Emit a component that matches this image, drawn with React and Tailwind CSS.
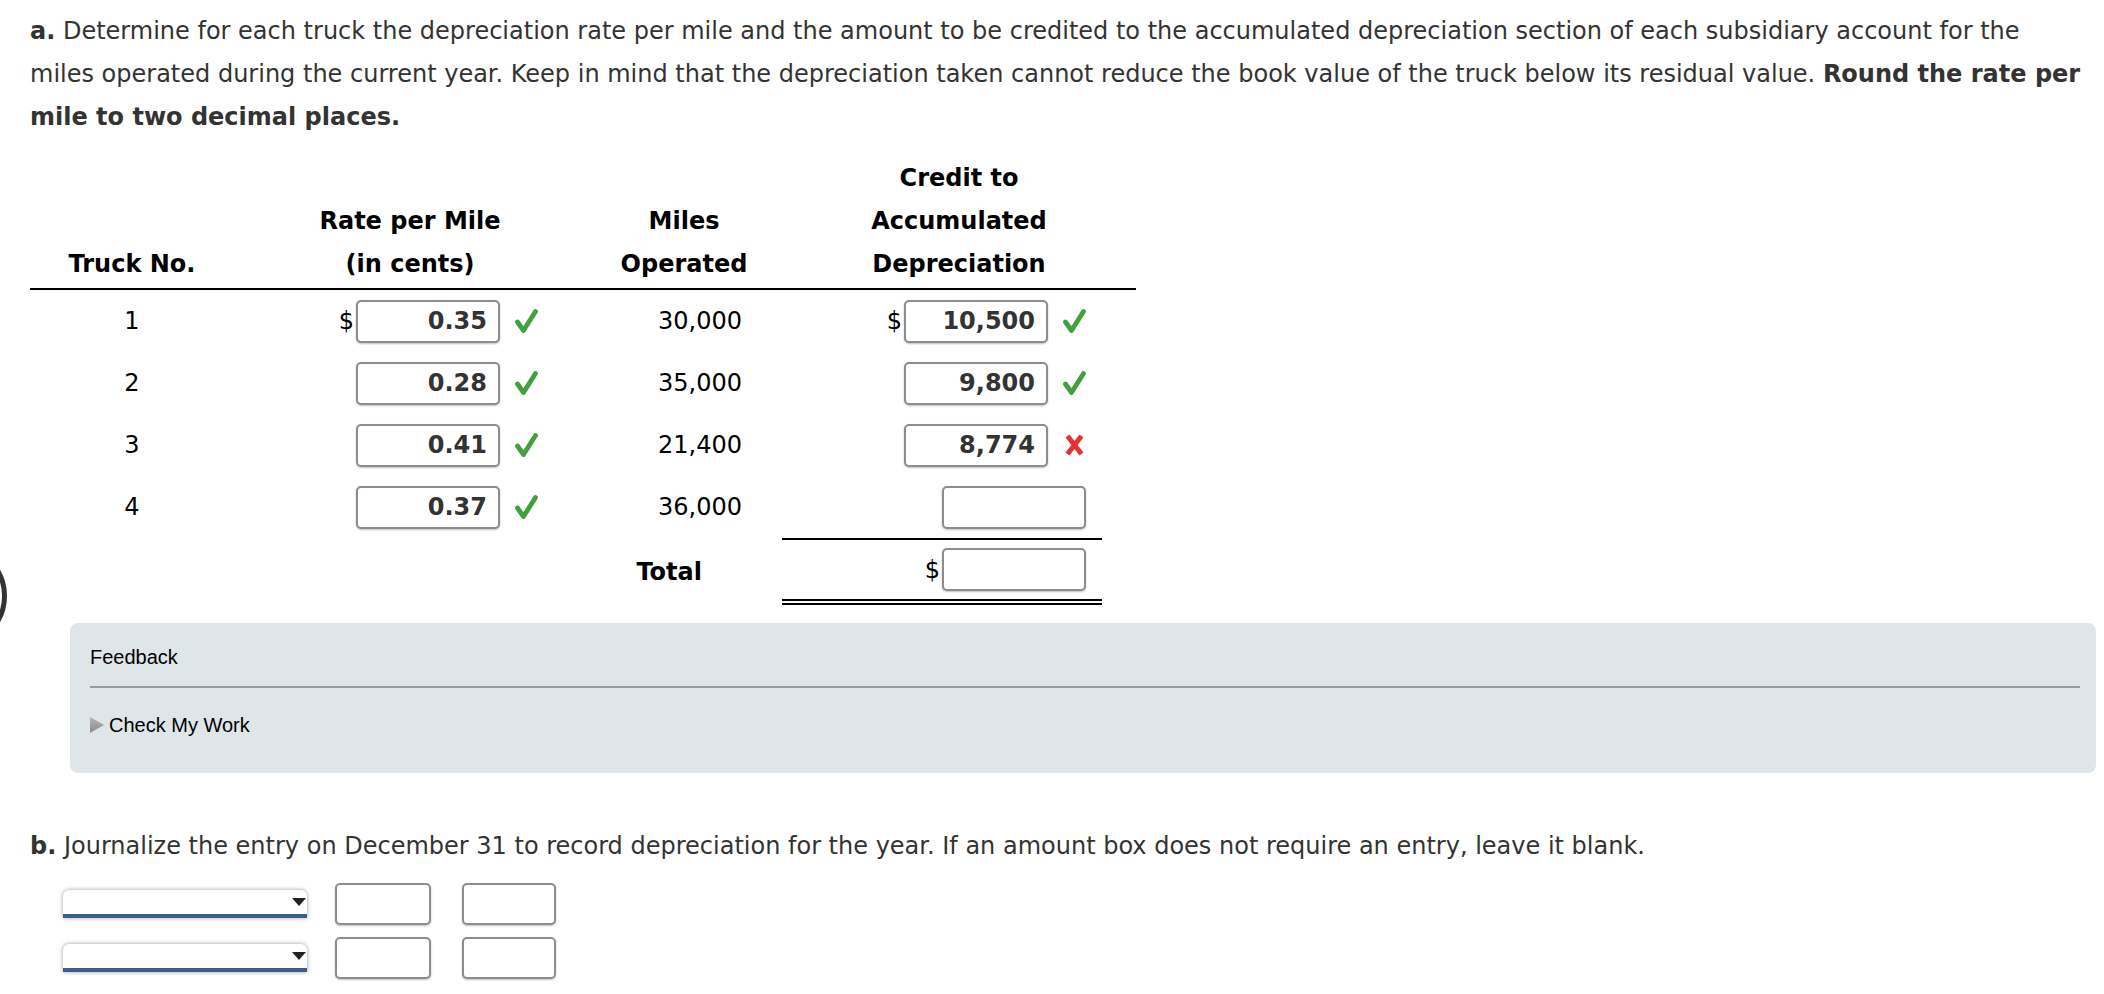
import React from "react";

const rows = [
  { no: "1", rate: "0.35", rateOk: true, miles: "30,000", credit: "10,500", creditMark: "ok", dollar: true },
  { no: "2", rate: "0.28", rateOk: true, miles: "35,000", credit: "9,800", creditMark: "ok" },
  { no: "3", rate: "0.41", rateOk: true, miles: "21,400", credit: "8,774", creditMark: "bad" },
  { no: "4", rate: "0.37", rateOk: true, miles: "36,000", credit: "", creditMark: null },
];

function Check() {
  return (
    <span className="ml-[15px] w-[23px] h-[26px] flex items-center justify-center">
      <svg width="23" height="26" viewBox="0 0 23 26">
        <path d="M2.5 14 L8.5 22.5 L20.5 3.5" fill="none" stroke="#43a03e" strokeWidth="4.8" strokeLinecap="round" strokeLinejoin="round" />
      </svg>
    </span>
  );
}

function Cross() {
  return (
    <span className="ml-[15px] w-[23px] h-[26px] flex items-center justify-center">
      <svg width="19" height="22" viewBox="0 0 19 22">
        <path d="M2.5 2 L16.5 20 M16.5 2 L2.5 20" fill="none" stroke="#e3342f" strokeWidth="5" />
      </svg>
    </span>
  );
}

function Box({ value }) {
  return (
    <div className="w-[144px] h-[43px] border-2 border-[#8d8d8d] rounded-[5px] bg-white shadow-[0_1px_2px_rgba(0,0,0,0.25)] flex items-center justify-end pr-[11px] font-bold text-[#333]">
      {value}
    </div>
  );
}

function Select() {
  return (
    <div className="w-[244px] h-[28px] bg-white rounded-t-[6px] shadow-[0_0_4px_rgba(0,0,0,0.4)] border-b-[4px] border-[#3d5f87] flex items-center justify-end">
      <svg width="14" height="8" viewBox="0 0 14 8" className="mr-[1px]">
        <polygon points="0,0 14,0 7,8" fill="#222" />
      </svg>
    </div>
  );
}

function JournalRow() {
  return (
    <div className="flex items-center">
      <div className="ml-[33px]">
        <Select />
      </div>
      <div className="ml-[28px] w-[96px] h-[42px] border-2 border-[#8d8d8d] rounded-[5px] bg-white shadow-[0_1px_2px_rgba(0,0,0,0.25)]" />
      <div className="ml-[31px] w-[94px] h-[42px] border-2 border-[#8d8d8d] rounded-[5px] bg-white shadow-[0_1px_2px_rgba(0,0,0,0.25)]" />
    </div>
  );
}

export default function App() {
  return (
    <div className="relative min-h-screen bg-white font-['DejaVu_Sans',Verdana,sans-serif] text-[24px] pl-[30px] pt-[10px] overflow-hidden">
      <div className="absolute left-[-97px] top-[544px] w-[104px] h-[104px] rounded-full border-[5px] border-[#333]" />

      <p className="leading-[43px] text-[#333] whitespace-nowrap">
        <b>a.</b> Determine for each truck the depreciation rate per mile and the amount to be credited to the accumulated depreciation section of each subsidiary account for the
        <br />
        miles operated during the current year. Keep in mind that the depreciation taken cannot reduce the book value of the truck below its residual value. <b>Round the rate per</b>
        <br />
        <b>mile to two decimal places.</b>
      </p>

      <div className="mt-[18px] w-[1106px] text-black">
        <div className="grid grid-cols-[204px_352px_196px_354px] items-end border-b-2 border-black font-bold leading-[43px] pb-[2px] text-center">
          <div>Truck No.</div>
          <div>Rate per Mile<br />(in cents)</div>
          <div>Miles<br />Operated</div>
          <div>Credit to<br />Accumulated<br />Depreciation</div>
        </div>

        {rows.map((r) => (
          <div key={r.no} className="grid grid-cols-[204px_352px_196px_354px] items-center h-[62px]">
            <div className="text-center">{r.no}</div>
            <div className="flex items-center justify-end pr-[48px]">
              {r.dollar && <span className="mr-[2px]">$</span>}
              <Box value={r.rate} />
              {r.rateOk ? <Check /> : <span className="w-[38px]" />}
            </div>
            <div className="text-right pr-[40px]">{r.miles}</div>
            <div className="flex items-center justify-end pr-[50px]">
              {r.dollar && <span className="mr-[2px]">$</span>}
              <Box value={r.credit} />
              {r.creditMark === "ok" && <Check />}
              {r.creditMark === "bad" && <Cross />}
            </div>
          </div>
        ))}

        <div className="grid grid-cols-[204px_352px_196px_354px] items-stretch">
          <div />
          <div />
          <div className="flex items-center justify-end pr-[80px] font-bold">Total</div>
          <div className="w-[320px] border-t-2 border-b-[6px] border-double border-black h-[67px] flex items-center justify-end pr-[16px]">
            <span className="mr-[2px]">$</span>
            <Box value="" />
          </div>
        </div>
      </div>

      <div className="mt-[18px] ml-[40px] mr-[8px] rounded-[8px] bg-[#dfe6ea] pl-[20px] pr-[16px] pt-[22px] pb-[36px] font-['Liberation_Sans',Arial,sans-serif] text-[20px] leading-[24px] text-black">
        <div>Feedback</div>
        <div className="mt-[17px] border-t-2 border-[#979ca0]" />
        <div className="mt-[25px] flex items-center">
          <svg width="14" height="16" viewBox="0 0 14 16" className="mr-[5px]">
            <defs>
              <linearGradient id="tri" x1="0" y1="0" x2="0" y2="1">
                <stop offset="0" stopColor="#b5b5b5" />
                <stop offset="1" stopColor="#8a8a8a" />
              </linearGradient>
            </defs>
            <polygon points="0,0 14,8 0,16" fill="url(#tri)" />
          </svg>
          <span>Check My Work</span>
        </div>
      </div>

      <p className="mt-[52px] leading-[43px] text-[#333]">
        <b>b.</b> Journalize the entry on December 31 to record depreciation for the year. If an amount box does not require an entry, leave it blank.
      </p>

      <div className="mt-[15px] flex flex-col gap-[12px]">
        <JournalRow />
        <JournalRow />
      </div>
    </div>
  );
}
